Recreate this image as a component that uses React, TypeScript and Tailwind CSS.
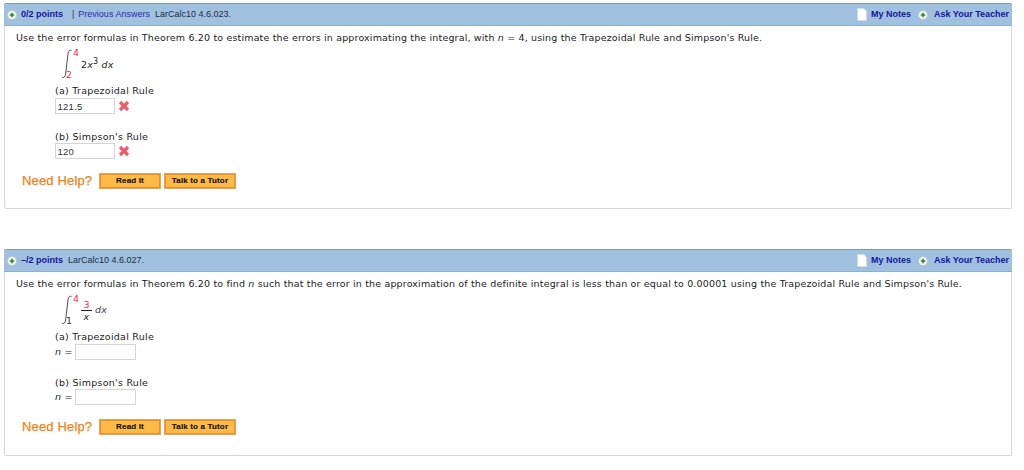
const sans = "font-['Liberation_Sans',Arial,sans-serif]";
const verdana = "font-['DejaVu_Sans',Verdana,sans-serif]";

function PlusIcon() {
  return (
    <svg width="10" height="10" viewBox="0 0 10 10" className="shrink-0">
      <circle cx="5" cy="5" r="4.6" fill="#f1f1ee" stroke="#b9bdb9" strokeWidth="0.6" />
      <path d="M5 2.8v4.4M2.8 5h4.4" stroke="#1e8a2c" strokeWidth="1.5" />
    </svg>
  );
}

function NoteIcon() {
  return (
    <svg width="10" height="13" viewBox="0 0 10 13" className="shrink-0">
      <path d="M.5.5h6.5l2.5 3v9H.5z" fill="#fff" stroke="#d5dbe2" strokeWidth="0.7" />
    </svg>
  );
}

function Cross() {
  return (
    <svg width="12" height="12" viewBox="0 0 12 12" className="shrink-0">
      <path d="M2 2l8 8M10 2l-8 8" stroke="#ee5a68" strokeWidth="3.2" />
    </svg>
  );
}

function Integral({ lower, upper, lowerRed }: { lower: string; upper: string; lowerRed?: boolean }) {
  return (
    <div className="relative h-[30px] w-[18px] shrink-0">
      <svg width="12" height="30" viewBox="0 0 12 30" className="absolute left-0 top-0">
        <path d="M10.5 1.5C8.5.5 7.5 2 7 5L4.6 25C4.2 28 3 29 1 28.2" fill="none" stroke="#222" strokeWidth="0.8" />
      </svg>
      <span className="absolute left-[12px] top-[-1px] text-[9.5px] leading-[10px] tracking-normal text-[#e8323c]">
        {upper}
      </span>
      <span className={`absolute left-[5px] bottom-[-1px] text-[9.5px] leading-[10px] tracking-normal ${lowerRed ? "text-[#e8323c]" : "text-[#333]"}`}>{lower}</span>
    </div>
  );
}

function HelpButton({ label, width }: { label: string; width: string }) {
  return (
    <button className={`${width} h-[16px] border border-[#dfa566] bg-[#ee8f26] p-[1px]`}>
      <span className="flex h-full items-center justify-center bg-[#fdbb45] text-[8px] font-bold text-[#111] [-webkit-text-stroke:0.15px_#111]">
        {label}
      </span>
    </button>
  );
}

function HelpRow() {
  return (
    <div className={`${sans} flex items-center pl-[17px]`}>
      <span className="w-[77px] whitespace-nowrap text-[13px] leading-[18px] font-medium text-[#ee8313] [-webkit-text-stroke:0.25px_#ee8313]">Need Help?</span>
      <HelpButton label="Read It" width="w-[62px]" />
      <span className="ml-[3px] flex">
        <HelpButton label="Talk to a Tutor" width="w-[72px]" />
      </span>
    </div>
  );
}

function Header({ points, children }: { points: string; children: React.ReactNode }) {
  return (
    <div className={`${sans} flex h-[23px] items-center justify-between rounded-t-[2px] border-t border-b border-t-[#7f9bb3] border-b-[#8fb0cb] bg-[#9fc1df] pl-[3px] pr-[3px] text-[9px]`}>
      <div className="flex items-center">
        <PlusIcon />
        <span className="ml-[4px] font-bold text-[#1414a0]">{points}</span>
        {children}
      </div>
      <div className="flex items-center font-bold text-[#1414a0]">
        <NoteIcon />
        <span className="ml-[4px]">My Notes</span>
        <span className="ml-[7px]"><PlusIcon /></span>
        <span className="ml-[6px]">Ask Your Teacher</span>
      </div>
    </div>
  );
}

function Panel({ header, children, height }: { header: React.ReactNode; children: React.ReactNode; height: string }) {
  return (
    <section className="mx-[4px] w-[1008px]">
      {header}
      <div className={`${height} border-r border-b border-l border-[#d8d8d8] rounded-b-[2px] ${verdana} text-[9.5px] tracking-[0.16px] text-[#222]`}>
        {children}
      </div>
    </section>
  );
}

export default function App() {
  return (
    <div className="h-[470px] w-[1024px] overflow-hidden bg-white pt-[3px]">
      <Panel
        height="h-[183px]"
        header={
          <Header points="0/2 points">
            <span className="ml-[9px] text-[#333]">|</span>
            <span className="ml-[4px] text-[#2a2aae]">Previous Answers</span>
            <span className="ml-[5px] text-[#222c40]">LarCalc10 4.6.023.</span>
          </Header>
        }
      >
        <p className="pl-[11px] pt-[5px] leading-[13px]">
          Use the error formulas in Theorem 6.20 to estimate the errors in approximating the integral, with <i>n</i> = 4, using the Trapezoidal Rule and Simpson's Rule.
        </p>
        <div className="flex items-center pl-[56px] pt-[5px]">
          <Integral lower="2" upper="4" lowerRed />
          <span className="ml-[2px] translate-y-[1px]">2<i>x</i><sup className="text-[8px]">3</sup> <i>dx</i></span>
        </div>
        <div className="pl-[50px] pt-[5px] tracking-[0.26px]">
          <div className="leading-[13px]">(a) Trapezoidal Rule</div>
          <div className="mt-[1px] flex items-center gap-[3px]">
            <input readOnly value="121.5" className={`${sans} h-[16px] w-[60px] border border-[#d5d5d5] pl-[1.5px] text-[9.5px] text-[#333]`} />
            <Cross />
          </div>
          <div className="mt-[16px] leading-[13px]">(b) Simpson's Rule</div>
          <div className="flex items-center gap-[3px]">
            <input readOnly value="120" className={`${sans} h-[16px] w-[60px] border border-[#d5d5d5] pl-[1.5px] text-[9.5px] text-[#333]`} />
            <Cross />
          </div>
        </div>
        <div className="pt-[13px]">
          <HelpRow />
        </div>
      </Panel>

      <div className="h-[40px]" />

      <Panel
        height="h-[184px]"
        header={
          <Header points="–/2 points">
            <span className="ml-[5px] text-[#222c40]">LarCalc10 4.6.027.</span>
          </Header>
        }
      >
        <p className="pl-[11px] pt-[5px] leading-[13px]">
          Use the error formulas in Theorem 6.20 to find <i>n</i> such that the error in the approximation of the definite integral is less than or equal to 0.00001 using the Trapezoidal Rule and Simpson's Rule.
        </p>
        <div className="flex items-center pl-[56px] pt-[5px]">
          <Integral lower="1" upper="4" />
          <span className="ml-[2px] flex w-[11px] flex-col items-center leading-[11px]">
            <span className="w-full border-b border-[#222] text-center text-[#e8323c]">3</span>
            <i>x</i>
          </span>
          <i className="ml-[3px] text-[#444]">dx</i>
        </div>
        <div className="pl-[50px] pt-[5px] tracking-[0.26px]">
          <div className="leading-[13px]">(a) Trapezoidal Rule</div>
          <div className="mt-[1px] flex items-center gap-[3px]">
            <span className="w-[17px] whitespace-nowrap"><i>n</i> =</span>
            <input readOnly className="h-[16px] w-[61px] border border-[#d5d5d5]" />
          </div>
          <div className="mt-[16px] leading-[13px]">(b) Simpson's Rule</div>
          <div className="flex items-center gap-[3px]">
            <span className="w-[17px] whitespace-nowrap"><i>n</i> =</span>
            <input readOnly className="h-[16px] w-[61px] border border-[#d5d5d5]" />
          </div>
        </div>
        <div className="pt-[13px]">
          <HelpRow />
        </div>
      </Panel>
    </div>
  );
}
